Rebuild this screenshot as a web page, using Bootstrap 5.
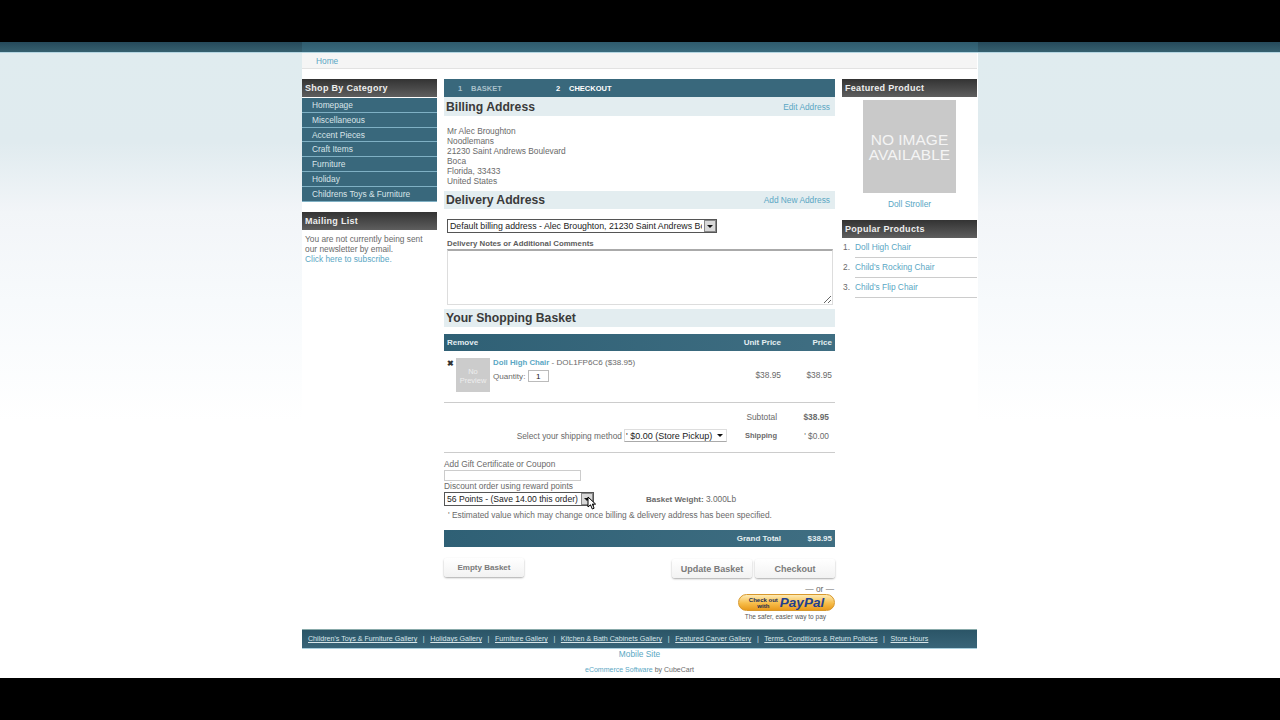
<!DOCTYPE html>
<html lang="en">
<head>
  <meta charset="UTF-8" />
  <title>Checkout</title>
  <link href="https://cdn.jsdelivr.net/npm/bootstrap@5.3.0/dist/css/bootstrap.min.css" rel="stylesheet"/>
  <style>
    body { background: #000; font-family: "Liberation Sans", Arial, sans-serif; font-size: 8.35px; line-height: 10px; color: #6a6a6a; }
    a { color: #5aa7c4; text-decoration: none; }
    .blackbar { height: 42px; background: #000; }
    .shop-page { height: 636px; background: linear-gradient(#e0ecef 11px, #e0ebef 100px, #f2f5f8 170px, #f7fafc 260px, #fff 380px); position: relative; }
    .top-band { height: 11px; background: linear-gradient(#25495a, #36606f); border-bottom: 1px solid #b5d6e2; }
    .top-band-in { width: 676px; height: 10px; margin: 0 auto; background: linear-gradient(#2e5a6c, #3a6b7e); }
    .shop-wrap { width: 676px; height: 625px; margin: 0 auto; padding-right: 1px; background: #fff; }
    .crumb { height: 16px; background: #f5f5f5; border-bottom: 1px solid #e2e2e2; padding: 3px 14px 0; margin-bottom: 10px; }
    .side-col { width: 135px; }
    .mid-col { width: 391px; }
    .side-head { height: 18px; background: linear-gradient(#333, #5e5e5e); color: #eee; font-weight: 700; font-size: 9px; line-height: 19px; padding-left: 3px; letter-spacing: .3px; }
    .cat-list { margin: 1px 0 10px; padding: 0; list-style: none; }
    .cat-list li { height: 14.8px; line-height: 15px; background: #39687c; border-bottom: 1px solid #7fb0c4; padding-left: 10px; color: #d8e4e8; }
    .mail-text { padding: 4px 3px; }
    .steps { height: 18px; background: #39687c; color: #fff; font-weight: 700; font-size: 7.5px; line-height: 19px; padding-left: 14px; }
    .steps .step-off { color: #a9c0ca; width: 98px; }
    .step-no { display: inline-block; width: 13px; }
    .sec-head { height: 18px; background: #e3edf0; display: flex; justify-content: space-between; align-items: center; padding: 0 5px 0 2px; }
    .sec-head b { font-size: 12.2px; color: #3a3a3a; }
    .sec-first { height: 19px; }
    .addr { height: 75px; padding: 10px 3px 0; }
    .win-select { display: flex; border: 1px solid #555; background: #fff; }
    .win-select select { appearance: none; border: 0; background: #fff; padding: 0 2px; flex: 1; min-width: 0; font: 8.8px/12px "Liberation Sans", Arial, sans-serif; color: #222; outline: 0; }
    .win-arrow { width: 12px; background: #d8d8d8; border: 1px solid #888; display: flex; align-items: center; justify-content: center; }
    .win-arrow i { border: 3px solid transparent; border-top: 3px solid #111; border-bottom: 0; }
    .addr-select { width: 270px; height: 14px; margin: 10px 0 6px 3px; }
    .note-label { font-weight: 700; font-size: 7.8px; margin-left: 3px; color: #5c5c5c; }
    .note-box { display: block; width: 386px; height: 56px; margin: 0 0 4px 3px; border: 1px solid #ddd; border-top: 2px solid #aaa; padding: 2px; }
    .basket-head { height: 17px; margin-top: 7px; background: linear-gradient(90deg, #2f6075, #3f6e82); color: #e4eef1; font-weight: 700; font-size: 8px; line-height: 17px; padding-left: 3px; display: flex; }
    .col-unit { width: 50px; text-align: right; }
    .col-price { width: 54px; text-align: right; padding-right: 3px; }
    .basket-row { height: 52px; border-bottom: 1px solid #ccc; display: flex; padding: 7px 0 0 3px; }
    .rm-x { width: 9px; font-weight: 700; color: #333; font-size: 8px; margin-top: 1px; }
    .thumb { width: 34px; height: 34px; background: #ccc; color: #eee; font-size: 7.5px; text-align: center; padding-top: 9px; line-height: 9px; margin-right: 3px; }
    .item-info { font-size: 8.1px; }
    .item-info a { font-size: 7.8px; }
    .qty-line { margin-top: 2px; }
    .qty-box { display: inline-block; width: 21px; height: 12px; border: 1px solid #bbb; text-align: center; color: #222; line-height: 11px; }
    .amount { margin-top: 12px; }
    .sum-wrap { height: 50px; border-bottom: 1px solid #ccc; padding-top: 4px; }
    .sum-line { display: flex; justify-content: flex-end; align-items: center; height: 19px; padding-right: 6px; }
    .sum-l { width: 75px; text-align: right; }
    .sum-v { width: 52px; text-align: right; }
    .ship-label { font-size: 7.5px; }
    .ship-select { width: 103px; height: 13px; font-size: 9px; color: #222; border: 1px solid #ddd; border-bottom-color: #aaa; display: flex; justify-content: space-between; padding: 0 3px 0 1px; align-items: center; margin: 0 18px 0 2px; }
    .ship-select i { border: 3px solid transparent; border-top: 3px solid #111; border-bottom: 0; }
    .gift-label { margin-top: 6px; }
    .gift-input { display: block; width: 137px; height: 11px; border: 1px solid #ccc; margin-top: 1px; }
    .points-label { margin-bottom: 1px; }
    .points-select { width: 150px; height: 14px; }
    .points-select select { font-size: 8.6px; }
    .basket-weight { margin-left: 52px; }
    .basket-weight b { font-size: 8px; }
    .grand { height: 17px; background: linear-gradient(90deg, #2f6075, #3f6e82); color: #e4eef1; font-weight: 700; font-size: 8px; line-height: 17px; display: flex; justify-content: flex-end; margin-top: 10px; }
    .btn-row { margin-top: 11px; height: 20px; }
    .grey-btn { height: 19px; width: 80px; border: 0; border-radius: 3px; background: linear-gradient(#fff, #f2f2f2); box-shadow: 0 1px 2px #aaa; font: 700 9px "Liberation Sans", Arial, sans-serif; color: #7a7a7a; padding: 0; }
    .btn-small { font-size: 8px; }
    .btn-pair { gap: 3px; padding-top: 1px; }
    .pay-block { margin-top: 6px; }
    .or-text { height: 10px; padding-right: 1px; }
    .pp-btn { width: 97px; height: 17px; border-radius: 9px; background: linear-gradient(#fdeab4, #f7bd4a 55%, #e89a1c); display: flex; align-items: center; justify-content: center; gap: 2px; border: 1px solid #d8982c; }
    .pp-small { font-size: 6px; line-height: 6px; font-weight: 700; color: #1a2a50; text-align: center; }
    .pp-logo { font-size: 13.5px; font-weight: 700; font-style: italic; color: #1f3f8f; }
    .pp-note { font-size: 6.5px; margin-top: 1px; padding-right: 9px; color: #555; }
    .foot-bar { height: 20px; background: linear-gradient(#2b5567, #386478); border-bottom: 1px solid #a9cfde; border-top: 1px solid #8aa; margin-top: 7px; color: #d8e6ea; font-size: 7.1px; line-height: 18px; padding-left: 6px; white-space: nowrap; }
    .foot-bar a { color: #d8e6ea; text-decoration: underline; }
    .foot-bar span { margin: 0 5.6px; }
    .foot-mobile { height: 10px; }
    .foot-credit { font-size: 7px; margin-top: 6px; }
    .pop-list { margin: 0; padding: 0; list-style: none; }
    .pop-list li { display: flex; height: 20px; line-height: 19px; padding-left: 1px; }
    .pop-list li span { width: 12px; }
    .pop-list li a { flex: 1; border-bottom: 1px solid #ccc; }
    .no-img { width: 93px; height: 93px; background: #c9c9c9; color: #f4f4f4; font-size: 15.5px; line-height: 15px; text-align: center; margin: 3px auto 6px; padding-top: 32px; }
    .stroller { height: 10px; margin-bottom: 11px; }
    .cursor-mark { position: absolute; left: 587px; top: 454px; }
  </style>
</head>
<body>
  <div class="blackbar"></div>
  <div class="shop-page">
    <div class="top-band"><div class="top-band-in"></div></div>
    <div class="shop-wrap">
      <div class="crumb"><a href="#">Home</a></div>
      <div class="d-flex justify-content-between">

        <div class="side-col">
          <div class="side-head">Shop By Category</div>
          <ul class="cat-list">
            <li>Homepage</li>
            <li>Miscellaneous</li>
            <li>Accent Pieces</li>
            <li>Craft Items</li>
            <li>Furniture</li>
            <li>Holiday</li>
            <li>Childrens Toys &amp; Furniture</li>
          </ul>
          <div class="side-head">Mailing List</div>
          <div class="mail-text">You are not currently being sent<br>our newsletter by email.<br><a href="#">Click here to subscribe.</a></div>
        </div>

        <div class="mid-col">
          <div class="steps d-flex"><span class="step-off"><span class="step-no">1</span>BASKET</span><span><span class="step-no">2</span>CHECKOUT</span></div>
          <div class="sec-head sec-first"><b>Billing Address</b><a href="#">Edit Address</a></div>
          <div class="addr">Mr Alec Broughton<br>Noodlemans<br>21230 Saint Andrews Boulevard<br>Boca<br>Florida, 33433<br>United States</div>
          <div class="sec-head"><b>Delivery Address</b><a href="#">Add New Address</a></div>
          <div class="win-select addr-select">
            <select><option>Default billing address - Alec Broughton, 21230 Saint Andrews Boulevard, Boca</option></select>
            <span class="win-arrow"><i></i></span>
          </div>
          <div class="note-label">Delivery Notes or Additional Comments</div>
          <textarea class="note-box"></textarea>
          <div class="sec-head"><b>Your Shopping Basket</b></div>

          <div class="basket-head"><span class="flex-grow-1">Remove</span><span class="col-unit">Unit Price</span><span class="col-price">Price</span></div>
          <div class="basket-row">
            <span class="rm-x">&#10006;</span>
            <div class="thumb">No Preview</div>
            <div class="flex-grow-1 item-info">
              <div><a href="#" class="fw-bold">Doll High Chair</a> - DOL1FP6C6 ($38.95)</div>
              <div class="qty-line">Quantity: <span class="qty-box">1</span></div>
            </div>
            <span class="col-unit amount">$38.95</span><span class="col-price amount">$38.95</span>
          </div>
          <div class="sum-wrap">
            <div class="sum-line"><span class="sum-l">Subtotal</span><span class="sum-v fw-bold">$38.95</span></div>
            <div class="sum-line">
              <span>Select your shipping method</span>
              <span class="ship-select"><span>' $0.00 (Store Pickup)</span><i></i></span>
              <span class="fw-bold ship-label">Shipping</span><span class="sum-v">' $0.00</span>
            </div>
          </div>

          <div class="gift-label">Add Gift Certificate or Coupon</div>
          <input type="text" class="gift-input">
          <div class="points-label">Discount order using reward points</div>
          <div class="d-flex align-items-center">
            <div class="win-select points-select">
              <select><option>56 Points - (Save 14.00 this order)</option></select>
              <span class="win-arrow"><i></i></span>
            </div>
            <div class="basket-weight"><b>Basket Weight:</b> 3.000Lb</div>
          </div>
          <div class="mt-1 ps-1">' Estimated value which may change once billing &amp; delivery address has been specified.</div>
          <div class="grand"><span>Grand Total</span><span class="col-price">$38.95</span></div>

          <div class="d-flex justify-content-between btn-row">
            <button class="grey-btn btn-small">Empty Basket</button>
            <div class="d-flex btn-pair">
              <button class="grey-btn">Update Basket</button>
              <button class="grey-btn">Checkout</button>
            </div>
          </div>
          <div class="d-flex flex-column align-items-end pay-block">
            <span class="or-text">&mdash; or &mdash;</span>
            <div class="pp-btn"><span class="pp-small">Check out<br>with</span><span class="pp-logo">PayPal</span></div>
            <div class="pp-note">The safer, easier way to pay</div>
          </div>
        </div>

        <div class="side-col">
          <div class="side-head">Featured Product</div>
          <div class="no-img">NO IMAGE AVAILABLE</div>
          <div class="text-center stroller"><a href="#">Doll Stroller</a></div>
          <div class="side-head">Popular Products</div>
          <ol class="pop-list">
            <li><span>1.</span><a href="#">Doll High Chair</a></li>
            <li><span>2.</span><a href="#">Child's Rocking Chair</a></li>
            <li><span>3.</span><a href="#">Child's Flip Chair</a></li>
          </ol>
        </div>
      </div>

      <div class="foot-bar"><a href="#">Children's Toys &amp; Furniture Gallery</a><span>|</span><a href="#">Holidays Gallery</a><span>|</span><a href="#">Furniture Gallery</a><span>|</span><a href="#">Kitchen &amp; Bath Cabinets Gallery</a><span>|</span><a href="#">Featured Carver Gallery</a><span>|</span><a href="#">Terms, Conditions &amp; Return Policies</a><span>|</span><a href="#">Store Hours</a></div>
      <div class="text-center foot-mobile"><a href="#">Mobile Site</a></div>
      <div class="text-center foot-credit"><a href="#">eCommerce Software</a> by CubeCart</div>
    </div>
    <svg class="cursor-mark" width="10" height="15" viewBox="0 0 10 15"><path d="M1 1v10l2.500-2.200 1.800 4.200 1.800-.8-1.800-4.100h3.300z" fill="#fff" stroke="#000"/></svg>
  </div>
  <div class="blackbar"></div>
</body>
</html>
